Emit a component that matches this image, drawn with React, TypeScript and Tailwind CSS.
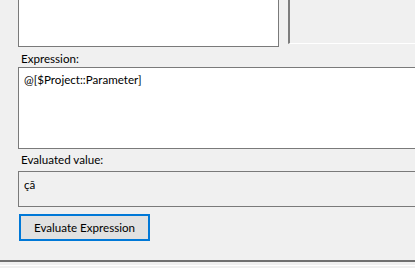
import React from "react";

export default function App() {
  const font = { fontFamily: '"Segoe UI", Lato, "Noto Sans", sans-serif' };
  return (
    <div
      className="w-[415px] h-[268px] overflow-hidden bg-[#f0f0f0] text-[11.6px] text-black relative"
      style={font}
    >
      <div className="flex h-[47px]">
        <div className="ml-[18px] w-[261px] h-[47px] bg-white border border-t-0 border-[#7a7a7a]" />
        <div className="ml-[9px] flex-1 h-[44px] border-l-2 border-l-[#7d7d7d] border-b border-b-white" />
      </div>
      <div className="ml-[21px] mt-[4px] h-[16px] leading-[16px]">Expression:</div>
      <div className="ml-[18px] w-[420px] h-[82px] bg-white border border-[#7a7a7a] px-[5px] pt-[4px] leading-[16px]">
        @[$Project::Parameter]
      </div>
      <div className="ml-[21px] mt-[3px] h-[16px] leading-[16px]">Evaluated value:</div>
      <div className="ml-[18px] mt-[3px] w-[420px] h-[36px] bg-[#f0f0f0] border border-[#7a7a7a] px-[5px] pt-[5px] leading-[16px]">
        çã
      </div>
      <div className="ml-[19px] mt-[7px] w-[131px] h-[27px] bg-[#e1e1e1] border-2 border-[#0078d7] flex items-center justify-center leading-[16px]">
        Evaluate Expression
      </div>
      <div className="mt-[19px] h-[2px] bg-[#707070]" />
      <div className="mt-[3px] h-[1px] bg-white" />
      <div className="mt-[2px] h-[1px] bg-[#7c87c4]" />
    </div>
  );
}
